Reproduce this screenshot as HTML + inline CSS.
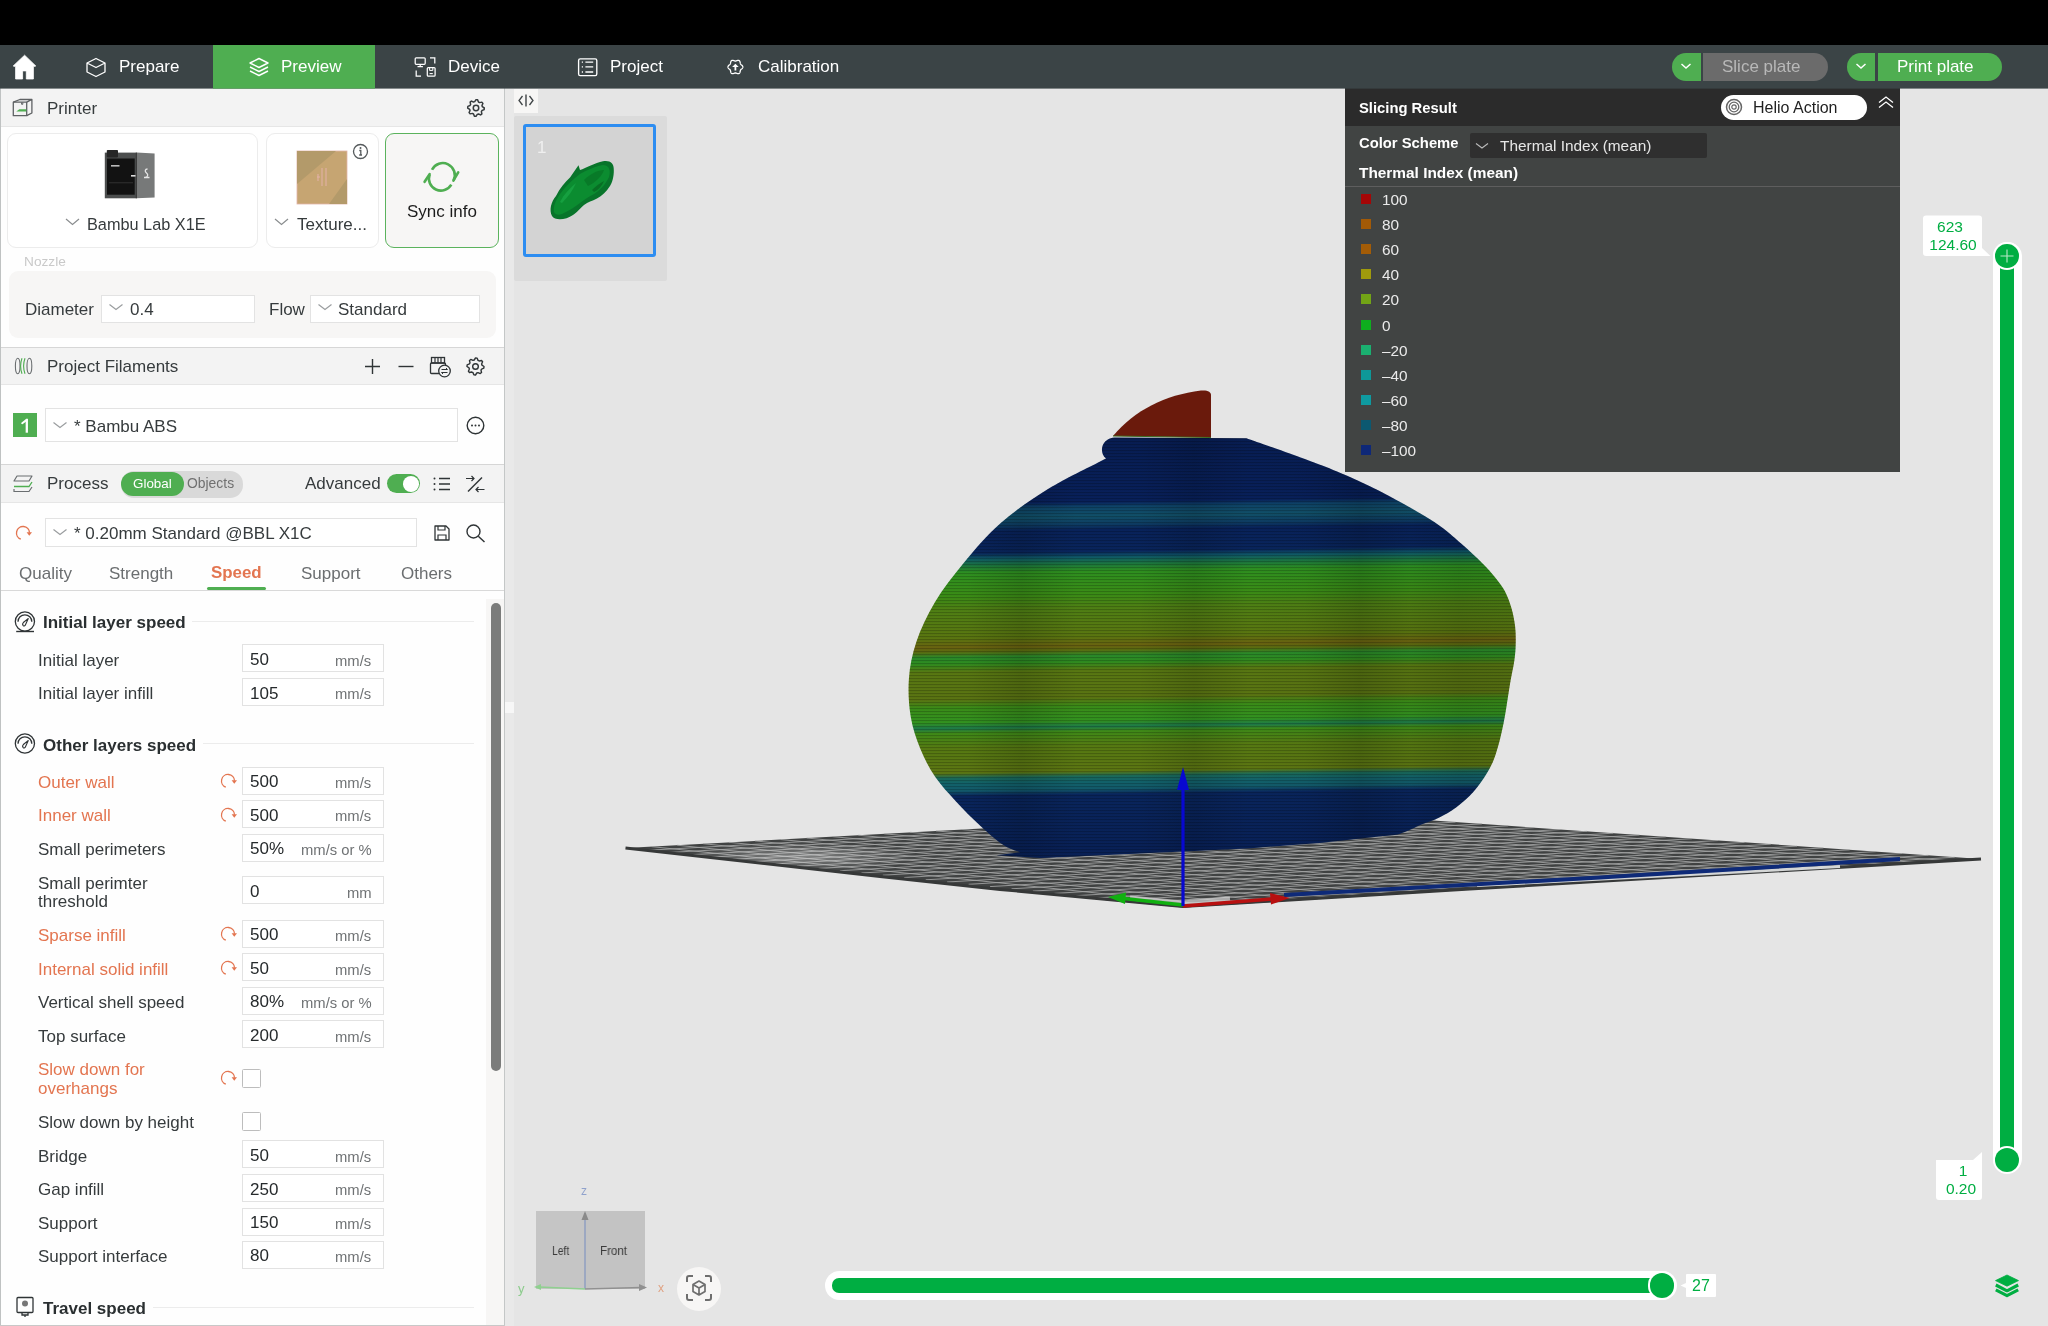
<!DOCTYPE html>
<html><head><meta charset="utf-8"><title>Bambu Studio Preview</title>
<style>
html,body{margin:0;padding:0;width:2048px;height:1326px;overflow:hidden;background:#000;}
body{position:relative;font-family:"Liberation Sans", sans-serif;}
.t{position:absolute;white-space:nowrap;font-family:"Liberation Sans", sans-serif;-webkit-font-smoothing:antialiased;will-change:transform;}
.b{position:absolute;}
svg.b{overflow:visible;}
</style></head><body>
<div class="b" style="left:0px;top:0px;width:2048px;height:45px;background:#000"></div>
<div class="b" style="left:0px;top:45px;width:2048px;height:43px;background:#3b4446"></div>
<div class="b" style="left:213px;top:45px;width:162.4px;height:43px;background:#4fae51"></div>
<svg class="b" style="left:12px;top:53px;" width="26" height="27" viewBox="0 0 26 27"><path d="M12.6 2.2 L1.2 13 L3.6 13.6 L3.6 26 L10.6 26 L10.6 17.9 L14.3 17.9 L14.3 26 L21.4 26 L21.4 13.6 L23.8 13 Z" fill="#fff" stroke="#fff" stroke-width="0.8" stroke-linejoin="round"/></svg>
<svg class="b" style="left:85px;top:57px;" width="22" height="21" viewBox="0 0 22 21"><path d="M11 1.5 L20 6 L20 15 L11 19.5 L2 15 L2 6 Z M2 6 L11 10.5 L20 6" fill="none" stroke="#fff" stroke-width="1.3" stroke-linejoin="round"/></svg>
<svg class="b" style="left:248px;top:57px;" width="22" height="21" viewBox="0 0 22 21"><path d="M11 1.5 L20 6 L11 10.5 L2 6 Z" fill="none" stroke="#fff" stroke-width="1.4" stroke-linejoin="round"/><path d="M2 10 L11 14.5 L20 10 M2 14 L11 18.5 L20 14" fill="none" stroke="#fff" stroke-width="1.4" stroke-linejoin="round"/></svg>
<svg class="b" style="left:405px;top:50px;" width="50" height="32" viewBox="0 0 50 32"><g fill="none" stroke="#fff" stroke-width="1.25"><rect x="10.2" y="7.8" width="10" height="6.5" rx="1"/><path d="M15.2 14.3 V16.5 M12.5 16.6 H17.9"/><path d="M25 7.8 H29.8 V13.6"/><path d="M11.2 20.5 V26 H16"/><rect x="22.3" y="17.6" width="7.8" height="8.6" rx="1"/><path d="M24.6 17.8 V20.4 H27.8 V17.8" stroke-width="1"/><path d="M24.6 23.6 H27.8" stroke-width="1.1"/></g></svg>
<svg class="b" style="left:570px;top:50px;" width="40" height="32" viewBox="0 0 40 32"><rect x="8.6" y="8.8" width="18.2" height="16.8" rx="1.6" fill="none" stroke="#fff" stroke-width="1.35"/><path d="M11.8 12.1 H13 M15.4 12.1 H23.2 M11.8 16.9 H13 M15.4 16.9 H23.2 M11.8 22 H13 M15.4 22 H23.2" stroke="#fff" stroke-width="1.4"/></svg>
<svg class="b" style="left:720px;top:50px;" width="32" height="32" viewBox="0 0 32 32"><path d="M22.84 17.00 L22.79 17.39 L22.66 17.76 L22.45 18.12 L22.18 18.44 L21.87 18.73 L21.56 19.00 L21.25 19.25 L20.98 19.48 L20.75 19.72 L20.56 19.98 L20.43 20.27 L20.34 20.59 L20.27 20.94 L20.21 21.33 L20.14 21.74 L20.04 22.15 L19.89 22.54 L19.69 22.90 L19.43 23.21 L19.12 23.44 L18.76 23.59 L18.37 23.67 L17.96 23.66 L17.54 23.59 L17.13 23.47 L16.75 23.33 L16.38 23.19 L16.04 23.07 L15.71 22.99 L15.40 22.96 L15.09 22.99 L14.76 23.07 L14.42 23.19 L14.05 23.33 L13.67 23.47 L13.26 23.59 L12.84 23.66 L12.43 23.67 L12.04 23.59 L11.68 23.44 L11.37 23.21 L11.11 22.90 L10.91 22.54 L10.76 22.15 L10.66 21.74 L10.59 21.33 L10.53 20.94 L10.46 20.59 L10.37 20.27 L10.24 19.98 L10.05 19.72 L9.82 19.48 L9.55 19.25 L9.24 19.00 L8.93 18.73 L8.62 18.44 L8.35 18.12 L8.14 17.76 L8.01 17.39 L7.96 17.00 L8.01 16.61 L8.14 16.24 L8.35 15.88 L8.62 15.56 L8.93 15.27 L9.24 15.00 L9.55 14.75 L9.82 14.52 L10.05 14.28 L10.24 14.02 L10.37 13.73 L10.46 13.41 L10.53 13.06 L10.59 12.67 L10.66 12.26 L10.76 11.85 L10.91 11.46 L11.11 11.10 L11.37 10.79 L11.68 10.56 L12.04 10.41 L12.43 10.33 L12.84 10.34 L13.26 10.41 L13.67 10.53 L14.05 10.67 L14.42 10.81 L14.76 10.93 L15.09 11.01 L15.40 11.04 L15.71 11.01 L16.04 10.93 L16.38 10.81 L16.75 10.67 L17.13 10.53 L17.54 10.41 L17.96 10.34 L18.37 10.33 L18.76 10.41 L19.12 10.56 L19.43 10.79 L19.69 11.10 L19.89 11.46 L20.04 11.85 L20.14 12.26 L20.21 12.67 L20.27 13.06 L20.34 13.41 L20.43 13.73 L20.56 14.02 L20.75 14.28 L20.98 14.52 L21.25 14.75 L21.56 15.00 L21.87 15.27 L22.18 15.56 L22.45 15.88 L22.66 16.24 L22.79 16.61Z" fill="none" stroke="#fff" stroke-width="1.3"/><path d="M15.4 13.8 L18.7 17 L16.3 17 L16.3 20.4 L14.5 20.4 L14.5 17 L12.1 17 Z" fill="#fff"/></svg>
<div class="t" style="left:118.5px;top:57.6px;font-size:17px;line-height:17px;color:#fff;">Prepare</div>
<div class="t" style="left:281.0px;top:57.6px;font-size:17px;line-height:17px;color:#fff;">Preview</div>
<div class="t" style="left:448.0px;top:57.6px;font-size:17px;line-height:17px;color:#fff;">Device</div>
<div class="t" style="left:610.0px;top:57.6px;font-size:17px;line-height:17px;color:#fff;">Project</div>
<div class="t" style="left:758.0px;top:57.6px;font-size:17px;line-height:17px;color:#fff;">Calibration</div>
<div class="b" style="left:1671.5px;top:52.5px;width:29px;height:28.5px;background:#4fae51;border-radius:14px 0 0 14px"></div>
<div class="b" style="left:1703px;top:52.5px;width:125px;height:28.5px;background:#6b6b6b;border-radius:0 14px 14px 0"></div>
<svg class="b" style="left:1679px;top:61px;" width="14" height="10" viewBox="0 0 14 10"><path d="M2.5 3 L7 7 L11.5 3" fill="none" stroke="#fff" stroke-width="1.5"/></svg>
<div class="t" style="left:1721.5px;top:57.6px;font-size:17px;line-height:17px;color:#b8b8b8;">Slice plate</div>
<div class="b" style="left:1847px;top:52.5px;width:28px;height:28.5px;background:#4fae51;border-radius:14px 0 0 14px"></div>
<div class="b" style="left:1878px;top:52.5px;width:124px;height:28.5px;background:#4fae51;border-radius:0 14px 14px 0"></div>
<svg class="b" style="left:1854px;top:61px;" width="14" height="10" viewBox="0 0 14 10"><path d="M2.5 3 L7 7 L11.5 3" fill="none" stroke="#fff" stroke-width="1.5"/></svg>
<div class="t" style="left:1896.5px;top:57.6px;font-size:17px;line-height:17px;color:#fff;">Print plate</div>
<div class="b" style="left:0px;top:88px;width:505px;height:1238px;background:#fefefe"></div>
<div class="b" style="left:0px;top:88px;width:1px;height:1238px;background:#bfc2c2"></div>
<div class="b" style="left:504px;top:88px;width:1px;height:1238px;background:#c4c7c7"></div>
<div class="b" style="left:505px;top:88px;width:9px;height:1238px;background:#e9e9e9"></div>
<div class="b" style="left:1px;top:88px;width:503px;height:38px;background:#f3f3f3"></div>
<div class="b" style="left:1px;top:126px;width:503px;height:1px;background:#e6e6e6"></div>
<svg class="b" style="left:12px;top:98px;" width="22" height="20" viewBox="0 0 22 20"><g fill="none" stroke="#5f6264" stroke-width="1.3" stroke-linejoin="round"><path d="M1.3 4.2 H14.7 V17.7 H1.3 Z"/><path d="M1.3 4.2 L7.9 1.5 H19.9 L14.7 4.2 M19.9 1.5 V15 L14.7 17.7"/><path d="M9.6 4.4 V6.3 H10.8 V4.4" stroke-width="1"/></g><path d="M4.3 13.6 L7.3 11.3 H14.2 V13.6 Z" fill="#4fae51"/></svg>
<div class="t" style="left:47.0px;top:99.5px;font-size:17px;line-height:17px;color:#363b3d;">Printer</div>
<svg class="b" style="left:466px;top:98px;" width="20" height="20" viewBox="0 0 20 20"><path d="M10.00 1.70 L11.62 1.86 L12.48 4.02 L13.60 4.62 L15.87 4.13 L16.90 5.39 L15.98 7.52 L16.35 8.74 L18.30 10.00 L18.14 11.62 L15.98 12.48 L15.38 13.60 L15.87 15.87 L14.61 16.90 L12.48 15.98 L11.26 16.35 L10.00 18.30 L8.38 18.14 L7.52 15.98 L6.40 15.38 L4.13 15.87 L3.10 14.61 L4.02 12.48 L3.65 11.26 L1.70 10.00 L1.86 8.38 L4.02 7.52 L4.62 6.40 L4.13 4.13 L5.39 3.10 L7.52 4.02 L8.74 3.65Z" fill="none" stroke="#363b3d" stroke-width="1.5" stroke-linejoin="round"/><circle cx="10" cy="10" r="2.74" fill="none" stroke="#363b3d" stroke-width="1.5"/></svg>
<div class="b" style="left:7px;top:132.5px;width:251px;height:115.5px;background:#fff;border:1px solid #ececec;border-radius:9px;box-sizing:border-box"></div>
<div class="b" style="left:265.5px;top:132.5px;width:113px;height:115.5px;background:#fff;border:1px solid #ececec;border-radius:9px;box-sizing:border-box"></div>
<div class="b" style="left:385px;top:132.5px;width:114px;height:115.8px;background:#f7f6f5;border:1.5px solid #5bb35d;border-radius:9px;box-sizing:border-box"></div>
<svg class="b" style="left:98px;top:144px;" width="64" height="60" viewBox="0 0 64 60"><rect x="6.8" y="8.6" width="31.7" height="45.7" fill="#4c4e4e"/><rect x="8.8" y="5.9" width="11.2" height="7.5" rx="0.8" fill="#262626"/><rect x="9" y="14.5" width="27.7" height="36.2" fill="#121212"/><path d="M38.5 8.6 L56.6 9.6 V53.5 L38.5 54.3 Z" fill="#777979"/><rect x="37.8" y="8.6" width="1.2" height="45.7" fill="#3c3c3c"/><rect x="13" y="21" width="8.5" height="1.6" fill="#bbb"/><rect x="33" y="31" width="4.5" height="1.6" fill="#ddd"/><path d="M11 38.8 H35" stroke="#3a3a3a" stroke-width="0.8"/><path d="M49.5 25 C47 25 46.5 27.5 48.5 29 C50.5 30.5 50 33 47 33.5 M46 33.5 H51.5" fill="none" stroke="#e6e6e6" stroke-width="1.3"/></svg>
<svg class="b" style="left:64px;top:217px;" width="18" height="10" viewBox="0 0 18 10"><path d="M2 2 L8.5 7.5 L15 2" fill="none" stroke="#8a8d8f" stroke-width="1.2"/></svg>
<div class="t" style="left:87.0px;top:215.9px;font-size:16.3px;line-height:16.3px;color:#363b3d;">Bambu Lab X1E</div>
<svg class="b" style="left:296px;top:149px;" width="53" height="57" viewBox="0 0 53 57"><rect x="1" y="2" width="50" height="53" fill="#c6a572" stroke="#e2b3a8" stroke-width="0.8"/><path d="M1 2 H40 L1 35 Z" fill="#b39a6a"/><path d="M51 30 L51 55 L33 55 Z" fill="#b39a6a"/><path d="M26 19 V37 M30 19 V37 M24 28 H21 M22 25 V32" stroke="#e4b1a8" stroke-width="1"/></svg>
<svg class="b" style="left:352px;top:143px;" width="17" height="17" viewBox="0 0 17 17"><circle cx="8.5" cy="8.5" r="7" fill="none" stroke="#555a5c" stroke-width="1.3"/><circle cx="8.5" cy="5" r="1" fill="#555a5c"/><path d="M7.3 7.5 H8.8 V12 M7.2 12 H10" stroke="#555a5c" stroke-width="1.3" fill="none"/></svg>
<svg class="b" style="left:273px;top:217px;" width="18" height="10" viewBox="0 0 18 10"><path d="M2 2 L8.5 7.5 L15 2" fill="none" stroke="#8a8d8f" stroke-width="1.2"/></svg>
<div class="t" style="left:296.7px;top:215.6px;font-size:17px;line-height:17px;color:#363b3d;">Texture...</div>
<svg class="b" style="left:410px;top:150px;" width="65" height="50" viewBox="0 0 65 50"><g fill="none" stroke="#4fae51" stroke-width="2.6"><path d="M22 19.8 A12 12 0 0 1 43.6 30.4"/><path d="M43.4 30.6 L48.2 22.4" stroke-linecap="round"/><path d="M41.3 34.6 A12 12 0 0 1 19.6 24.6"/><path d="M19.6 24.2 L14.6 31.8" stroke-linecap="round"/></g></svg>
<div class="t" style="left:406.7px;top:202.5px;font-size:17px;line-height:17px;color:#1c1c1c;">Sync info</div>
<div class="t" style="left:24.0px;top:255.3px;font-size:13.7px;line-height:13.7px;color:#c9c9c9;">Nozzle</div>
<div class="b" style="left:9px;top:270.5px;width:487px;height:67px;background:#f7f6f5;border-radius:9px"></div>
<div class="t" style="left:25.4px;top:301.0px;font-size:17px;line-height:17px;color:#363b3d;">Diameter</div>
<div class="b" style="left:101.3px;top:294.5px;width:154px;height:28px;background:#fff;border:1px solid #e3e3e3;box-sizing:border-box"></div>
<svg class="b" style="left:107px;top:302px;" width="18" height="10" viewBox="0 0 18 10"><path d="M2.5 2.5 L9 7.5 L15.5 2.5" fill="none" stroke="#9a9d9f" stroke-width="1.2"/></svg>
<div class="t" style="left:129.5px;top:301.0px;font-size:17px;line-height:17px;color:#363b3d;">0.4</div>
<div class="t" style="left:269.0px;top:301.0px;font-size:17px;line-height:17px;color:#363b3d;">Flow</div>
<div class="b" style="left:310.3px;top:294.5px;width:169.5px;height:28px;background:#fff;border:1px solid #e3e3e3;box-sizing:border-box"></div>
<svg class="b" style="left:316px;top:302px;" width="18" height="10" viewBox="0 0 18 10"><path d="M2.5 2.5 L9 7.5 L15.5 2.5" fill="none" stroke="#9a9d9f" stroke-width="1.2"/></svg>
<div class="t" style="left:338.2px;top:301.0px;font-size:17px;line-height:17px;color:#363b3d;">Standard</div>
<div class="b" style="left:1px;top:347px;width:503px;height:1.2px;background:#d6d6d6"></div>
<div class="b" style="left:1px;top:348px;width:503px;height:36.5px;background:#f3f3f3"></div>
<div class="b" style="left:1px;top:384px;width:503px;height:1px;background:#e6e6e6"></div>
<svg class="b" style="left:12px;top:355px;" width="24" height="22" viewBox="0 0 24 22"><ellipse cx="5.7" cy="11" rx="2.3" ry="7.8" fill="none" stroke="#6a6e70" stroke-width="1.1"/><ellipse cx="17.4" cy="11" rx="2.4" ry="7.8" fill="none" stroke="#6a6e70" stroke-width="1.1"/><path d="M10 3.3 Q7.2 11 10 18.7 M13 3.3 Q10.2 11 13 18.7" fill="none" stroke="#4fae51" stroke-width="1.1"/></svg>
<div class="t" style="left:47.2px;top:358.1px;font-size:17px;line-height:17px;color:#363b3d;">Project Filaments</div>
<svg class="b" style="left:363px;top:357px;" width="19" height="19" viewBox="0 0 19 19"><path d="M9.5 2 V17 M2 9.5 H17" stroke="#2f3436" stroke-width="1.4"/></svg>
<svg class="b" style="left:397px;top:357px;" width="18" height="19" viewBox="0 0 18 19"><path d="M1.5 9.5 H16.5" stroke="#2f3436" stroke-width="1.4"/></svg>
<svg class="b" style="left:429px;top:356px;" width="23" height="22" viewBox="0 0 23 22"><rect x="1.5" y="7" width="15" height="10.5" rx="1" fill="none" stroke="#2f3436" stroke-width="1.3"/><rect x="2.5" y="1.5" width="13" height="5.5" fill="none" stroke="#2f3436" stroke-width="1.3"/><path d="M6 2 V6.5 M9 2 V6.5 M12 2 V6.5" stroke="#2f3436" stroke-width="1.2"/><circle cx="15.5" cy="15" r="5.8" fill="#f3f3f3" stroke="#2f3436" stroke-width="1.3"/><path d="M12.5 13.5 H18.5 L17 12 M18.5 16.5 H12.5 L14 18" fill="none" stroke="#2f3436" stroke-width="1"/></svg>
<svg class="b" style="left:465px;top:356px;" width="21" height="21" viewBox="0 0 21 21"><path d="M10.50 2.00 L12.16 2.16 L13.04 4.37 L14.18 4.99 L16.51 4.49 L17.57 5.78 L16.63 7.96 L17.00 9.21 L19.00 10.50 L18.84 12.16 L16.63 13.04 L16.01 14.18 L16.51 16.51 L15.22 17.57 L13.04 16.63 L11.79 17.00 L10.50 19.00 L8.84 18.84 L7.96 16.63 L6.82 16.01 L4.49 16.51 L3.43 15.22 L4.37 13.04 L4.00 11.79 L2.00 10.50 L2.16 8.84 L4.37 7.96 L4.99 6.82 L4.49 4.49 L5.78 3.43 L7.96 4.37 L9.21 4.00Z" fill="none" stroke="#2f3436" stroke-width="1.4" stroke-linejoin="round"/><circle cx="10.5" cy="10.5" r="2.81" fill="none" stroke="#2f3436" stroke-width="1.4"/></svg>
<div class="b" style="left:13px;top:413px;width:24px;height:24px;background:#4fae51"></div>
<svg class="b" style="left:13px;top:413px;" width="24" height="24" viewBox="0 0 24 24"><path d="M13.8 6.4 V19.7" stroke="#fff" stroke-width="2.3"/><path d="M14 6.6 L9.2 10.2" stroke="#fff" stroke-width="2" stroke-linecap="round"/></svg>
<div class="b" style="left:45px;top:408.2px;width:413px;height:34px;background:#fff;border:1px solid #e3e3e3;box-sizing:border-box"></div>
<svg class="b" style="left:51px;top:420px;" width="18" height="10" viewBox="0 0 18 10"><path d="M2.5 2.5 L9 7.5 L15.5 2.5" fill="none" stroke="#9a9d9f" stroke-width="1.2"/></svg>
<div class="t" style="left:73.9px;top:418.2px;font-size:17px;line-height:17px;color:#363b3d;">* Bambu ABS</div>
<svg class="b" style="left:466px;top:416px;" width="20" height="20" viewBox="0 0 20 20"><circle cx="9.5" cy="9.5" r="8.3" fill="none" stroke="#2f3436" stroke-width="1.4"/><circle cx="6" cy="9.5" r="1" fill="#2f3436"/><circle cx="9.5" cy="9.5" r="1" fill="#2f3436"/><circle cx="13" cy="9.5" r="1" fill="#2f3436"/></svg>
<div class="b" style="left:1px;top:464px;width:503px;height:1.2px;background:#d6d6d6"></div>
<div class="b" style="left:1px;top:465px;width:503px;height:37.5px;background:#f3f3f3"></div>
<div class="b" style="left:1px;top:502px;width:503px;height:1px;background:#e6e6e6"></div>
<svg class="b" style="left:12px;top:474px;" width="22" height="20" viewBox="0 0 22 20"><path d="M5 2 H20 L17 7 H2 Z" fill="none" stroke="#6a6e70" stroke-width="1.2" stroke-linejoin="round"/><path d="M20 8 L17 12.5 H2" fill="none" stroke="#4fae51" stroke-width="1.3"/><path d="M20 13 L17 17.5 H2 V15" fill="none" stroke="#6a6e70" stroke-width="1.2"/></svg>
<div class="t" style="left:47.2px;top:475.3px;font-size:17px;line-height:17px;color:#363b3d;">Process</div>
<div class="b" style="left:120.5px;top:471px;width:122.5px;height:26.5px;background:#d9d9d9;border-radius:13px"></div>
<div class="b" style="left:121.2px;top:472px;width:62.6px;height:23.8px;background:#4fae51;border-radius:12px"></div>
<div class="t" style="left:132.7px;top:477.2px;font-size:13.4px;line-height:13.4px;color:#fff;">Global</div>
<div class="t" style="left:186.6px;top:476.7px;font-size:13.9px;line-height:13.9px;color:#707070;">Objects</div>
<div class="t" style="left:305.2px;top:475.2px;font-size:17px;line-height:17px;color:#363b3d;">Advanced</div>
<div class="b" style="left:387px;top:474.3px;width:33px;height:19px;background:#4fae51;border-radius:10px"></div>
<div class="b" style="left:402.5px;top:476px;width:16px;height:15.5px;background:#fff;border-radius:50%"></div>
<svg class="b" style="left:432px;top:476px;" width="20" height="16" viewBox="0 0 20 16"><path d="M7 2.5 H18 M7 8 H18 M7 13.5 H18" stroke="#2f3436" stroke-width="1.5"/><circle cx="2.5" cy="2.5" r="1" fill="#2f3436"/><circle cx="2.5" cy="8" r="1" fill="#2f3436"/><circle cx="2.5" cy="13.5" r="1" fill="#2f3436"/></svg>
<svg class="b" style="left:465px;top:475px;" width="21" height="19" viewBox="0 0 21 19"><path d="M3 16.5 L17 2.5" stroke="#2f3436" stroke-width="1.4"/><path d="M1 3.5 H9 M6.5 1 L9 3.5 L6.5 6" fill="none" stroke="#2f3436" stroke-width="1.2"/><path d="M19.5 14.5 H11 M13.5 12 L11 14.5 L13.5 17" fill="none" stroke="#2f3436" stroke-width="1.2"/></svg>
<svg class="b" style="left:13.5px;top:525px;" width="18" height="16" viewBox="0 0 18 16"><path d="M6.8 14.1 A6.5 6.5 0 1 1 15.5 7.8" fill="none" stroke="#e37550" stroke-width="1.4"/><path d="M12.6 7.3 L18 7.3 L15.3 10.8 Z" fill="#e37550"/></svg>
<div class="b" style="left:45px;top:518px;width:372px;height:28.5px;background:#fff;border:1px solid #e3e3e3;box-sizing:border-box"></div>
<svg class="b" style="left:51px;top:527px;" width="18" height="10" viewBox="0 0 18 10"><path d="M2.5 2.5 L9 7.5 L15.5 2.5" fill="none" stroke="#9a9d9f" stroke-width="1.2"/></svg>
<div class="t" style="left:73.9px;top:524.6px;font-size:17px;line-height:17px;color:#363b3d;">* 0.20mm Standard @BBL X1C</div>
<svg class="b" style="left:433px;top:524px;" width="18" height="18" viewBox="0 0 18 18"><path d="M2 2 H13 L16 5 V16 H2 Z" fill="none" stroke="#2f3436" stroke-width="1.3" stroke-linejoin="round"/><path d="M5 2 V6 H12 V2 M5 16 V11 H13 V16" fill="none" stroke="#2f3436" stroke-width="1.2"/></svg>
<svg class="b" style="left:465px;top:523px;" width="22" height="21" viewBox="0 0 22 21"><circle cx="8.5" cy="8.5" r="6.5" fill="none" stroke="#2f3436" stroke-width="1.4"/><path d="M13.3 13.3 L19.5 19" stroke="#2f3436" stroke-width="1.5"/></svg>
<div class="t" style="left:18.8px;top:565.2px;font-size:17px;line-height:17px;color:#6b6e70;">Quality</div>
<div class="t" style="left:108.5px;top:565.2px;font-size:17px;line-height:17px;color:#6b6e70;">Strength</div>
<div class="t" style="left:211.4px;top:565.3px;font-size:16.9px;line-height:16.9px;color:#e37550;font-weight:bold;">Speed</div>
<div class="t" style="left:301.0px;top:565.2px;font-size:17px;line-height:17px;color:#6b6e70;">Support</div>
<div class="t" style="left:400.6px;top:565.2px;font-size:17px;line-height:17px;color:#6b6e70;">Others</div>
<div class="b" style="left:1px;top:590px;width:503px;height:1.3px;background:#d9d9d9"></div>
<div class="b" style="left:206.8px;top:586.7px;width:59.4px;height:3.2px;background:#4fae51;border-radius:2px"></div>
<div class="b" style="left:486px;top:599px;width:18px;height:727px;background:#f7f6f5"></div>
<div class="b" style="left:491px;top:602.5px;width:9.5px;height:468px;background:#7b7c7b;border-radius:5px"></div>
<div class="b" style="left:505px;top:702px;width:9px;height:11px;background:#f7f7f7"></div>
<svg class="b" style="left:5px;top:599.9px;" width="40" height="40" viewBox="0 0 40 40"><g fill="none" stroke="#2f3436"><circle cx="19.9" cy="21.5" r="9.6" stroke-width="1.3"/><path d="M13 21.7 A6.9 6.9 0 0 1 26.8 21.7" stroke-width="1.3"/><path d="M18.3 25.7 C17.2 24.7 17.6 23.5 18.4 22.5 L23.4 18.3 L20.6 24.5 C20.1 25.7 19.2 26.3 18.3 25.7 Z" stroke-width="1.1"/></g><path d="M11.2 31.5 H29" stroke="#2f3436" stroke-width="1.4"/></svg>
<div class="t" style="left:42.5px;top:614.4px;font-size:17px;line-height:17px;color:#2a2f31;font-weight:bold;">Initial layer speed</div>
<div class="b" style="left:192px;top:621px;width:282px;height:1px;background:#ececec"></div>
<svg class="b" style="left:5px;top:722.2px;" width="40" height="40" viewBox="0 0 40 40"><g fill="none" stroke="#2f3436"><circle cx="19.9" cy="21.5" r="9.6" stroke-width="1.3"/><path d="M13 21.7 A6.9 6.9 0 0 1 26.8 21.7" stroke-width="1.3"/><path d="M18.3 25.7 C17.2 24.7 17.6 23.5 18.4 22.5 L23.4 18.3 L20.6 24.5 C20.1 25.7 19.2 26.3 18.3 25.7 Z" stroke-width="1.1"/></g></svg>
<div class="t" style="left:42.5px;top:736.6px;font-size:17px;line-height:17px;color:#2a2f31;font-weight:bold;">Other layers speed</div>
<div class="b" style="left:203px;top:743px;width:271px;height:1px;background:#ececec"></div>
<div class="t" style="left:37.5px;top:651.6px;font-size:17px;line-height:17px;color:#363b3d;">Initial layer</div>
<div class="b" style="left:241.6px;top:644.3px;width:142px;height:28px;background:#fff;border:1px solid #e2e2e2;box-sizing:border-box"></div>
<div class="t" style="left:250.0px;top:650.8px;font-size:17px;line-height:17px;color:#262a2c;">50</div>
<div class="t" style="right:1676.5px;top:653.6px;font-size:14.8px;line-height:14.8px;color:#6f7274;">mm/s</div>
<div class="t" style="left:37.5px;top:685.3px;font-size:17px;line-height:17px;color:#363b3d;">Initial layer infill</div>
<div class="b" style="left:241.6px;top:678px;width:142px;height:28px;background:#fff;border:1px solid #e2e2e2;box-sizing:border-box"></div>
<div class="t" style="left:250.0px;top:684.5px;font-size:17px;line-height:17px;color:#262a2c;">105</div>
<div class="t" style="right:1676.5px;top:687.3px;font-size:14.8px;line-height:14.8px;color:#6f7274;">mm/s</div>
<div class="t" style="left:37.5px;top:773.9px;font-size:17px;line-height:17px;color:#e37550;">Outer wall</div>
<div class="b" style="left:241.6px;top:766.6px;width:142px;height:28px;background:#fff;border:1px solid #e2e2e2;box-sizing:border-box"></div>
<div class="t" style="left:250.0px;top:773.1px;font-size:17px;line-height:17px;color:#262a2c;">500</div>
<div class="t" style="right:1676.5px;top:775.9px;font-size:14.8px;line-height:14.8px;color:#6f7274;">mm/s</div>
<svg class="b" style="left:219.3px;top:773.1px;" width="18" height="16" viewBox="0 0 18 16"><path d="M6.8 14.1 A6.5 6.5 0 1 1 15.5 7.8" fill="none" stroke="#e37550" stroke-width="1.3"/><path d="M12.6 7.3 L18 7.3 L15.3 10.8 Z" fill="#e37550"/></svg>
<div class="t" style="left:37.5px;top:807.3px;font-size:17px;line-height:17px;color:#e37550;">Inner wall</div>
<div class="b" style="left:241.6px;top:800px;width:142px;height:28px;background:#fff;border:1px solid #e2e2e2;box-sizing:border-box"></div>
<div class="t" style="left:250.0px;top:806.5px;font-size:17px;line-height:17px;color:#262a2c;">500</div>
<div class="t" style="right:1676.5px;top:809.3px;font-size:14.8px;line-height:14.8px;color:#6f7274;">mm/s</div>
<svg class="b" style="left:219.3px;top:806.5px;" width="18" height="16" viewBox="0 0 18 16"><path d="M6.8 14.1 A6.5 6.5 0 1 1 15.5 7.8" fill="none" stroke="#e37550" stroke-width="1.3"/><path d="M12.6 7.3 L18 7.3 L15.3 10.8 Z" fill="#e37550"/></svg>
<div class="t" style="left:37.5px;top:840.9px;font-size:17px;line-height:17px;color:#363b3d;">Small perimeters</div>
<div class="b" style="left:241.6px;top:833.6px;width:142px;height:28px;background:#fff;border:1px solid #e2e2e2;box-sizing:border-box"></div>
<div class="t" style="left:250.0px;top:840.1px;font-size:17px;line-height:17px;color:#262a2c;">50%</div>
<div class="t" style="right:1676.5px;top:842.9px;font-size:14.8px;line-height:14.8px;color:#6f7274;">mm/s or %</div>
<div class="b" style="left:241.6px;top:876.3px;width:142px;height:28px;background:#fff;border:1px solid #e2e2e2;box-sizing:border-box"></div>
<div class="t" style="left:250.0px;top:882.8px;font-size:17px;line-height:17px;color:#262a2c;">0</div>
<div class="t" style="right:1676.5px;top:885.6px;font-size:14.8px;line-height:14.8px;color:#6f7274;">mm</div>
<div class="t" style="left:37.5px;top:926.8px;font-size:17px;line-height:17px;color:#e37550;">Sparse infill</div>
<div class="b" style="left:241.6px;top:919.5px;width:142px;height:28px;background:#fff;border:1px solid #e2e2e2;box-sizing:border-box"></div>
<div class="t" style="left:250.0px;top:926.0px;font-size:17px;line-height:17px;color:#262a2c;">500</div>
<div class="t" style="right:1676.5px;top:928.8px;font-size:14.8px;line-height:14.8px;color:#6f7274;">mm/s</div>
<svg class="b" style="left:219.3px;top:926.0px;" width="18" height="16" viewBox="0 0 18 16"><path d="M6.8 14.1 A6.5 6.5 0 1 1 15.5 7.8" fill="none" stroke="#e37550" stroke-width="1.3"/><path d="M12.6 7.3 L18 7.3 L15.3 10.8 Z" fill="#e37550"/></svg>
<div class="t" style="left:37.5px;top:960.6px;font-size:17px;line-height:17px;color:#e37550;">Internal solid infill</div>
<div class="b" style="left:241.6px;top:953.3px;width:142px;height:28px;background:#fff;border:1px solid #e2e2e2;box-sizing:border-box"></div>
<div class="t" style="left:250.0px;top:959.8px;font-size:17px;line-height:17px;color:#262a2c;">50</div>
<div class="t" style="right:1676.5px;top:962.6px;font-size:14.8px;line-height:14.8px;color:#6f7274;">mm/s</div>
<svg class="b" style="left:219.3px;top:959.8px;" width="18" height="16" viewBox="0 0 18 16"><path d="M6.8 14.1 A6.5 6.5 0 1 1 15.5 7.8" fill="none" stroke="#e37550" stroke-width="1.3"/><path d="M12.6 7.3 L18 7.3 L15.3 10.8 Z" fill="#e37550"/></svg>
<div class="t" style="left:37.5px;top:994.0px;font-size:17px;line-height:17px;color:#363b3d;">Vertical shell speed</div>
<div class="b" style="left:241.6px;top:986.7px;width:142px;height:28px;background:#fff;border:1px solid #e2e2e2;box-sizing:border-box"></div>
<div class="t" style="left:250.0px;top:993.2px;font-size:17px;line-height:17px;color:#262a2c;">80%</div>
<div class="t" style="right:1676.5px;top:996.0px;font-size:14.8px;line-height:14.8px;color:#6f7274;">mm/s or %</div>
<div class="t" style="left:37.5px;top:1027.6px;font-size:17px;line-height:17px;color:#363b3d;">Top surface</div>
<div class="b" style="left:241.6px;top:1020.3px;width:142px;height:28px;background:#fff;border:1px solid #e2e2e2;box-sizing:border-box"></div>
<div class="t" style="left:250.0px;top:1026.8px;font-size:17px;line-height:17px;color:#262a2c;">200</div>
<div class="t" style="right:1676.5px;top:1029.6px;font-size:14.8px;line-height:14.8px;color:#6f7274;">mm/s</div>
<div class="t" style="left:37.5px;top:1147.6px;font-size:17px;line-height:17px;color:#363b3d;">Bridge</div>
<div class="b" style="left:241.6px;top:1140.3px;width:142px;height:28px;background:#fff;border:1px solid #e2e2e2;box-sizing:border-box"></div>
<div class="t" style="left:250.0px;top:1146.8px;font-size:17px;line-height:17px;color:#262a2c;">50</div>
<div class="t" style="right:1676.5px;top:1149.6px;font-size:14.8px;line-height:14.8px;color:#6f7274;">mm/s</div>
<div class="t" style="left:37.5px;top:1181.3px;font-size:17px;line-height:17px;color:#363b3d;">Gap infill</div>
<div class="b" style="left:241.6px;top:1174px;width:142px;height:28px;background:#fff;border:1px solid #e2e2e2;box-sizing:border-box"></div>
<div class="t" style="left:250.0px;top:1180.5px;font-size:17px;line-height:17px;color:#262a2c;">250</div>
<div class="t" style="right:1676.5px;top:1183.3px;font-size:14.8px;line-height:14.8px;color:#6f7274;">mm/s</div>
<div class="t" style="left:37.5px;top:1215.0px;font-size:17px;line-height:17px;color:#363b3d;">Support</div>
<div class="b" style="left:241.6px;top:1207.7px;width:142px;height:28px;background:#fff;border:1px solid #e2e2e2;box-sizing:border-box"></div>
<div class="t" style="left:250.0px;top:1214.2px;font-size:17px;line-height:17px;color:#262a2c;">150</div>
<div class="t" style="right:1676.5px;top:1217.0px;font-size:14.8px;line-height:14.8px;color:#6f7274;">mm/s</div>
<div class="t" style="left:37.5px;top:1248.2px;font-size:17px;line-height:17px;color:#363b3d;">Support interface</div>
<div class="b" style="left:241.6px;top:1240.9px;width:142px;height:28px;background:#fff;border:1px solid #e2e2e2;box-sizing:border-box"></div>
<div class="t" style="left:250.0px;top:1247.4px;font-size:17px;line-height:17px;color:#262a2c;">80</div>
<div class="t" style="right:1676.5px;top:1250.2px;font-size:14.8px;line-height:14.8px;color:#6f7274;">mm/s</div>
<div class="t" style="left:37.5px;top:874.5px;font-size:17px;line-height:17px;color:#363b3d;">Small perimter</div>
<div class="t" style="left:37.5px;top:893.0px;font-size:17px;line-height:17px;color:#363b3d;">threshold</div>
<div class="t" style="left:37.5px;top:1061.0px;font-size:17px;line-height:17px;color:#e37550;">Slow down for</div>
<div class="t" style="left:37.5px;top:1080.1px;font-size:17px;line-height:17px;color:#e37550;">overhangs</div>
<svg class="b" style="left:219.3px;top:1070px;" width="18" height="16" viewBox="0 0 18 16"><path d="M6.8 14.1 A6.5 6.5 0 1 1 15.5 7.8" fill="none" stroke="#e37550" stroke-width="1.3"/><path d="M12.6 7.3 L18 7.3 L15.3 10.8 Z" fill="#e37550"/></svg>
<div class="b" style="left:242.2px;top:1068.6px;width:18.5px;height:19px;background:#fff;border:1px solid #bdbdbd;border-radius:1.5px;box-sizing:border-box"></div>
<div class="t" style="left:37.5px;top:1113.6px;font-size:17px;line-height:17px;color:#363b3d;">Slow down by height</div>
<div class="b" style="left:242.2px;top:1111.7px;width:18.5px;height:19px;background:#fff;border:1px solid #bdbdbd;border-radius:1.5px;box-sizing:border-box"></div>
<svg class="b" style="left:15px;top:1296px;" width="20" height="22" viewBox="0 0 20 22"><rect x="2" y="1.5" width="16" height="15" rx="1" fill="none" stroke="#2f3436" stroke-width="1.3"/><circle cx="10" cy="7.5" r="3" fill="#777"/><path d="M7 16.5 V19 H13 V16.5 M10 19 V21" fill="none" stroke="#2f3436" stroke-width="1.3"/></svg>
<div class="t" style="left:42.6px;top:1299.6px;font-size:17px;line-height:17px;color:#2a2f31;font-weight:bold;">Travel speed</div>
<div class="b" style="left:153px;top:1307px;width:321px;height:1px;background:#ececec"></div>
<div class="b" style="left:0px;top:1325px;width:505px;height:1px;background:#c8c8c8"></div>
<div class="b" style="left:514px;top:88px;width:1534px;height:1238px;background:#e5e5e5"></div>
<div class="b" style="left:514px;top:89px;width:24px;height:24px;background:#f7f6f5"></div>
<svg class="b" style="left:517px;top:92px;" width="18" height="17" viewBox="0 0 18 17"><path d="M5.5 4 L2 8.5 L5.5 13 M12.5 4 L16 8.5 L12.5 13" fill="none" stroke="#3f4446" stroke-width="1.3"/><path d="M9 2.5 V14.5" stroke="#3f4446" stroke-width="1.4"/></svg>
<div class="b" style="left:514px;top:116px;width:153px;height:165px;background:#dbdbdb;border-radius:2px"></div>
<div class="b" style="left:522.7px;top:124.3px;width:133.3px;height:133px;background:#d3d3d3;border:3px solid #2d8df1;border-radius:3px;box-sizing:border-box"></div>
<div class="t" style="left:536.5px;top:138.6px;font-size:17px;line-height:17px;color:#efefef;">1</div>
<svg class="b" style="left:540px;top:150px;" width="80" height="75" viewBox="0 0 80 75"><path d="M12 66 C9 60 11 52 16 46 C20 38 25 32 30 27.5 L38.5 15.3 L40 20 C46 18 55 13 63 11.2 C70 10 74 13 73.8 20 C74 27 72 33 70 36 C66 42 62 46 57 48.5 C52 51 48 52 44 55 C40 58 38 62 33 65 C26 70 15 71 12 66 Z" fill="#08742a"/><path d="M14 62 C13 56 16 50 20 44 C26 36 32 30 40 24 C47 20 56 16 63 15 C69 15 71 20 69 27 C66 34 60 40 54 44 C48 47 44 50 40 53 C35 57 30 60 26 62 C21 65 16 66 14 62 Z" fill="#0b8c30"/><path d="M20 52 C24 44 30 38 36 33 C33 40 28 47 22 53 Z" fill="#16a040"/><path d="M44 30 C50 24 58 20 64 20 C62 26 56 32 48 36 Z" fill="#087a28"/><path d="M52 40 C56 36 60 33 64 31 C62 36 58 40 54 42 Z" fill="#086e24"/></svg>
<svg class="b" style="left:0;top:0" width="2048" height="1326" viewBox="0 0 2048 1326"><defs><linearGradient id="bodyg" x1="1200" y1="437" x2="1206" y2="858" gradientUnits="userSpaceOnUse"><stop offset="0.0" stop-color="#071d52"/><stop offset="0.15" stop-color="#08205a"/><stop offset="0.162" stop-color="#0e4468"/><stop offset="0.185" stop-color="#115068"/><stop offset="0.205" stop-color="#0d3a62"/><stop offset="0.217" stop-color="#08225a"/><stop offset="0.268" stop-color="#09255c"/><stop offset="0.282" stop-color="#0f5a66"/><stop offset="0.3" stop-color="#1e7a3a"/><stop offset="0.315" stop-color="#2e9020"/><stop offset="0.37" stop-color="#3a8c16"/><stop offset="0.4" stop-color="#4e8014"/><stop offset="0.47" stop-color="#5a7610"/><stop offset="0.492" stop-color="#6a6210"/><stop offset="0.502" stop-color="#5a6c10"/><stop offset="0.515" stop-color="#2a8a2a"/><stop offset="0.53" stop-color="#2e8c20"/><stop offset="0.55" stop-color="#587812"/><stop offset="0.615" stop-color="#5a7412"/><stop offset="0.635" stop-color="#3a8c18"/><stop offset="0.67" stop-color="#329220"/><stop offset="0.684" stop-color="#1e7a4a"/><stop offset="0.695" stop-color="#3e8a18"/><stop offset="0.73" stop-color="#567a12"/><stop offset="0.79" stop-color="#5c7612"/><stop offset="0.802" stop-color="#1a6a5a"/><stop offset="0.815" stop-color="#12626a"/><stop offset="0.832" stop-color="#125a6a"/><stop offset="0.845" stop-color="#09255c"/><stop offset="1.0" stop-color="#082056"/></linearGradient><pattern id="stripes" width="8" height="3" patternUnits="userSpaceOnUse"><rect width="8" height="1.1" fill="#000" opacity="0.2"/></pattern><pattern id="grid" width="12" height="12" patternUnits="userSpaceOnUse" patternTransform="scale(1,0.32) rotate(45)"><rect width="12" height="12" fill="#3e4040"/><path d="M0 0.6 H12 M0.6 0 V12" stroke="#b4b4b4" stroke-width="1.3"/></pattern><linearGradient id="ribs" x1="905" y1="0" x2="1520" y2="0" gradientUnits="userSpaceOnUse"><stop offset="0" stop-color="#000" stop-opacity="0.0"/><stop offset="0.1" stop-color="#000" stop-opacity="0.0"/><stop offset="0.19" stop-color="#000" stop-opacity="0.13"/><stop offset="0.28" stop-color="#000" stop-opacity="0.0"/><stop offset="0.38" stop-color="#000" stop-opacity="0.0"/><stop offset="0.47" stop-color="#000" stop-opacity="0.12"/><stop offset="0.56" stop-color="#000" stop-opacity="0.0"/><stop offset="0.65" stop-color="#000" stop-opacity="0.02"/><stop offset="0.74" stop-color="#000" stop-opacity="0.15"/><stop offset="0.82" stop-color="#000" stop-opacity="0.04"/><stop offset="0.9" stop-color="#000" stop-opacity="0.12"/><stop offset="1.0" stop-color="#000" stop-opacity="0.08"/></linearGradient><radialGradient id="hl" cx="800" cy="857" r="120" gradientUnits="userSpaceOnUse" gradientTransform="translate(800 857) scale(1 0.12) translate(-800 -857)"><stop offset="0" stop-color="#fff" stop-opacity="0.35"/><stop offset="1" stop-color="#fff" stop-opacity="0"/></radialGradient></defs><path d="M625.5 848 L1298 811 L1981 859 L1469.7 889.7 L1183 907.5 L1000 889.9 L880 877 Z" fill="#404242"/><path d="M651.4 846.6 L1213.7 905.2 M646.9 850.3 L1324.3 812.8 M677.2 845.2 L1244.4 903.3 M668.4 852.5 L1350.5 814.7 M703.1 843.7 L1275.1 901.5 M689.8 854.8 L1376.8 816.5 M729.0 842.3 L1305.8 899.6 M711.3 857.1 L1403.1 818.4 M754.8 840.9 L1336.5 897.8 M732.7 859.3 L1429.3 820.2 M780.7 839.5 L1367.2 895.9 M754.2 861.6 L1455.6 822.1 M806.6 838.0 L1397.8 894.1 M775.6 863.9 L1481.9 823.9 M832.4 836.6 L1428.5 892.2 M797.0 866.2 L1508.2 825.8 M858.3 835.2 L1459.2 890.4 M818.5 868.4 L1534.4 827.6 M884.2 833.8 L1489.9 888.5 M839.9 870.7 L1560.7 829.5 M910.0 832.3 L1520.6 886.7 M861.4 873.0 L1587.0 831.3 M935.9 830.9 L1551.3 884.8 M882.8 875.2 L1613.2 833.2 M961.8 829.5 L1582.0 883.0 M904.2 877.5 L1639.5 835.0 M987.6 828.1 L1612.7 881.2 M925.7 879.8 L1665.8 836.8 M1013.5 826.7 L1643.4 879.3 M947.1 882.0 L1692.0 838.7 M1039.3 825.2 L1674.1 877.5 M968.6 884.3 L1718.3 840.5 M1065.2 823.8 L1704.8 875.6 M990.0 886.6 L1744.6 842.4 M1091.1 822.4 L1735.5 873.8 M1011.5 888.8 L1770.8 844.2 M1116.9 821.0 L1766.2 871.9 M1032.9 891.1 L1797.1 846.1 M1142.8 819.5 L1796.8 870.1 M1054.3 893.4 L1823.4 847.9 M1168.7 818.1 L1827.5 868.2 M1075.8 895.7 L1849.7 849.8 M1194.5 816.7 L1858.2 866.4 M1097.2 897.9 L1875.9 851.6 M1220.4 815.3 L1888.9 864.5 M1118.7 900.2 L1902.2 853.5 M1246.3 813.8 L1919.6 862.7 M1140.1 902.5 L1928.5 855.3 M1272.1 812.4 L1950.3 860.8 M1161.6 904.7 L1954.7 857.2" stroke="#a4a6a6" stroke-width="1" fill="none" opacity="0.85"/><path d="M625.5 848 L1298 811 L1981 859 L1469.7 889.7 L1183 907.5 L1000 889.9 L880 877 Z" fill="url(#hl)"/><path d="M625.5 848 L880 876.5 L1000 889.4 L1183 906.5 L1469.7 889 L1981 859" fill="none" stroke="#363838" stroke-width="3" stroke-linejoin="round"/><path d="M1130 898 L1183 903 L1230 899" fill="none" stroke="#d8d8d8" stroke-width="5" opacity="0.7"/><path d="M1477 885.5 L1700 874 L1840 866.5" fill="none" stroke="#d4d6d6" stroke-width="3"/><path d="M1284 895 L1600 877.5 L1900 859" fill="none" stroke="#0e2a78" stroke-width="4"/><path d="M1106 458.5 C1101 455 1101 447 1104 443 C1107 439 1111 437.5 1116 437.5 L1246.4 438.3 C1256.7 441.9 1291.3 453.9 1308.1 460.2 C1324.9 466.4 1333.5 469.8 1347.2 475.8 C1360.9 481.9 1375.5 488.8 1390.0 496.5 C1404.5 504.2 1422.4 514.2 1434.3 522.1 C1446.2 530.0 1453.5 537.0 1461.4 543.8 C1469.3 550.6 1476.1 557.1 1481.8 562.8 C1487.5 568.4 1491.6 573.0 1495.4 577.7 C1499.2 582.5 1502.2 586.1 1504.9 591.3 C1507.6 596.5 1510.0 603.1 1511.7 609.0 C1513.4 614.9 1514.4 621.0 1515.1 626.6 C1515.8 632.2 1515.8 637.3 1515.7 642.9 C1515.6 648.5 1515.4 653.1 1514.4 660.0 C1513.5 666.9 1511.8 673.4 1510.0 684.0 C1508.2 694.6 1505.9 711.8 1503.5 723.5 C1501.1 735.2 1498.5 746.0 1495.7 754.2 C1493.0 762.5 1490.7 766.7 1487.0 773.0 C1483.3 779.3 1478.6 786.1 1473.5 791.8 C1468.4 797.5 1462.1 802.9 1456.4 807.2 C1450.7 811.5 1445.0 814.5 1439.3 817.4 C1433.6 820.2 1428.8 821.6 1422.2 824.3 C1415.7 827.0 1406.8 831.7 1400.0 833.7 C1393.2 835.7 1384.3 835.8 1381.2 836.2 L1319.6 843 L1251.3 848.2 L1200 850.7 L1040.9 858 L996.5 855.2 L1020 852.3 C1017.2 851.0 1009.6 849.2 1003.0 844.8 C996.4 840.4 988.3 833.2 980.5 826.0 C972.7 818.8 963.5 809.6 956.0 801.4 C948.5 793.2 941.3 785.8 935.3 777.0 C929.3 768.2 924.3 758.7 920.2 748.6 C916.1 738.5 912.6 728.2 910.7 716.6 C908.8 705.0 908.0 691.4 908.9 678.9 C909.8 666.4 912.1 654.6 916.4 641.8 C920.7 629.0 927.0 615.4 934.9 602.2 C942.8 589.0 952.9 575.9 963.9 562.7 C974.9 549.5 986.7 535.3 1000.8 523.0 C1014.9 510.7 1030.9 499.6 1048.4 488.8 C1065.9 478.1 1096.4 463.6 1106.0 458.5 Z" fill="url(#bodyg)"/><path d="M1106 458.5 C1101 455 1101 447 1104 443 C1107 439 1111 437.5 1116 437.5 L1246.4 438.3 C1256.7 441.9 1291.3 453.9 1308.1 460.2 C1324.9 466.4 1333.5 469.8 1347.2 475.8 C1360.9 481.9 1375.5 488.8 1390.0 496.5 C1404.5 504.2 1422.4 514.2 1434.3 522.1 C1446.2 530.0 1453.5 537.0 1461.4 543.8 C1469.3 550.6 1476.1 557.1 1481.8 562.8 C1487.5 568.4 1491.6 573.0 1495.4 577.7 C1499.2 582.5 1502.2 586.1 1504.9 591.3 C1507.6 596.5 1510.0 603.1 1511.7 609.0 C1513.4 614.9 1514.4 621.0 1515.1 626.6 C1515.8 632.2 1515.8 637.3 1515.7 642.9 C1515.6 648.5 1515.4 653.1 1514.4 660.0 C1513.5 666.9 1511.8 673.4 1510.0 684.0 C1508.2 694.6 1505.9 711.8 1503.5 723.5 C1501.1 735.2 1498.5 746.0 1495.7 754.2 C1493.0 762.5 1490.7 766.7 1487.0 773.0 C1483.3 779.3 1478.6 786.1 1473.5 791.8 C1468.4 797.5 1462.1 802.9 1456.4 807.2 C1450.7 811.5 1445.0 814.5 1439.3 817.4 C1433.6 820.2 1428.8 821.6 1422.2 824.3 C1415.7 827.0 1406.8 831.7 1400.0 833.7 C1393.2 835.7 1384.3 835.8 1381.2 836.2 L1319.6 843 L1251.3 848.2 L1200 850.7 L1040.9 858 L996.5 855.2 L1020 852.3 C1017.2 851.0 1009.6 849.2 1003.0 844.8 C996.4 840.4 988.3 833.2 980.5 826.0 C972.7 818.8 963.5 809.6 956.0 801.4 C948.5 793.2 941.3 785.8 935.3 777.0 C929.3 768.2 924.3 758.7 920.2 748.6 C916.1 738.5 912.6 728.2 910.7 716.6 C908.8 705.0 908.0 691.4 908.9 678.9 C909.8 666.4 912.1 654.6 916.4 641.8 C920.7 629.0 927.0 615.4 934.9 602.2 C942.8 589.0 952.9 575.9 963.9 562.7 C974.9 549.5 986.7 535.3 1000.8 523.0 C1014.9 510.7 1030.9 499.6 1048.4 488.8 C1065.9 478.1 1096.4 463.6 1106.0 458.5 Z" fill="url(#stripes)"/><path d="M1106 458.5 C1101 455 1101 447 1104 443 C1107 439 1111 437.5 1116 437.5 L1246.4 438.3 C1256.7 441.9 1291.3 453.9 1308.1 460.2 C1324.9 466.4 1333.5 469.8 1347.2 475.8 C1360.9 481.9 1375.5 488.8 1390.0 496.5 C1404.5 504.2 1422.4 514.2 1434.3 522.1 C1446.2 530.0 1453.5 537.0 1461.4 543.8 C1469.3 550.6 1476.1 557.1 1481.8 562.8 C1487.5 568.4 1491.6 573.0 1495.4 577.7 C1499.2 582.5 1502.2 586.1 1504.9 591.3 C1507.6 596.5 1510.0 603.1 1511.7 609.0 C1513.4 614.9 1514.4 621.0 1515.1 626.6 C1515.8 632.2 1515.8 637.3 1515.7 642.9 C1515.6 648.5 1515.4 653.1 1514.4 660.0 C1513.5 666.9 1511.8 673.4 1510.0 684.0 C1508.2 694.6 1505.9 711.8 1503.5 723.5 C1501.1 735.2 1498.5 746.0 1495.7 754.2 C1493.0 762.5 1490.7 766.7 1487.0 773.0 C1483.3 779.3 1478.6 786.1 1473.5 791.8 C1468.4 797.5 1462.1 802.9 1456.4 807.2 C1450.7 811.5 1445.0 814.5 1439.3 817.4 C1433.6 820.2 1428.8 821.6 1422.2 824.3 C1415.7 827.0 1406.8 831.7 1400.0 833.7 C1393.2 835.7 1384.3 835.8 1381.2 836.2 L1319.6 843 L1251.3 848.2 L1200 850.7 L1040.9 858 L996.5 855.2 L1020 852.3 C1017.2 851.0 1009.6 849.2 1003.0 844.8 C996.4 840.4 988.3 833.2 980.5 826.0 C972.7 818.8 963.5 809.6 956.0 801.4 C948.5 793.2 941.3 785.8 935.3 777.0 C929.3 768.2 924.3 758.7 920.2 748.6 C916.1 738.5 912.6 728.2 910.7 716.6 C908.8 705.0 908.0 691.4 908.9 678.9 C909.8 666.4 912.1 654.6 916.4 641.8 C920.7 629.0 927.0 615.4 934.9 602.2 C942.8 589.0 952.9 575.9 963.9 562.7 C974.9 549.5 986.7 535.3 1000.8 523.0 C1014.9 510.7 1030.9 499.6 1048.4 488.8 C1065.9 478.1 1096.4 463.6 1106.0 458.5 Z" fill="url(#ribs)"/><path d="M1113 436 C1135 410 1165 395 1201 390.5 C1208 390 1211 392 1211 395 L1211 437.5 Z" fill="#6a1a0c"/><path d="M1113 436 L1211 437.5" stroke="#3a6a20" stroke-width="1"/><path d="M1183 905 L1124 898.5" stroke="#10b010" stroke-width="3.6"/><path d="M1126 892.5 L1108 897 L1125 904 Z" fill="#10b010"/><path d="M1183 906 L1272 899" stroke="#b81010" stroke-width="3.6"/><path d="M1270 893 L1290 898 L1271 904.5 Z" fill="#b81010"/><path d="M1183 906 L1183 785" stroke="#0808d0" stroke-width="3.2"/><path d="M1177 790 L1183 767 L1189 790 Z" fill="#0808d0"/></svg>
<div class="b" style="left:1345px;top:88px;width:554.5px;height:38px;background:#2b2b2b"></div>
<div class="b" style="left:1345px;top:126px;width:554.5px;height:346px;background:#414443"></div>
<div class="t" style="left:1359.4px;top:100.8px;font-size:14.8px;line-height:14.8px;color:#fff;font-weight:bold;">Slicing Result</div>
<div class="b" style="left:1720.5px;top:94.8px;width:146.3px;height:25px;background:#fff;border-radius:13px"></div>
<svg class="b" style="left:1725px;top:98px;" width="18" height="18" viewBox="0 0 18 18"><circle cx="9" cy="9" r="7.5" fill="none" stroke="#666" stroke-width="1.5"/><circle cx="9" cy="9" r="4.8" fill="none" stroke="#666" stroke-width="1.3"/><circle cx="9" cy="9" r="2.2" fill="none" stroke="#666" stroke-width="1.2"/></svg>
<div class="t" style="left:1752.7px;top:99.8px;font-size:16px;line-height:16px;color:#1f1f1f;">Helio Action</div>
<svg class="b" style="left:1877px;top:95px;" width="18" height="15" viewBox="0 0 18 15"><path d="M2 7.5 L9 2 L16 7.5 M2 12.5 L9 7 L16 12.5" fill="none" stroke="#fff" stroke-width="1.3"/></svg>
<div class="t" style="left:1359.4px;top:135.7px;font-size:14.8px;line-height:14.8px;color:#fff;font-weight:bold;">Color Scheme</div>
<div class="b" style="left:1469.6px;top:133.3px;width:237px;height:24.7px;background:#2f2f2f;border-radius:2px"></div>
<svg class="b" style="left:1474px;top:141px;" width="17" height="10" viewBox="0 0 17 10"><path d="M2 2.5 L8 7 L14 2.5" fill="none" stroke="#bbb" stroke-width="1.1"/></svg>
<div class="t" style="left:1500.0px;top:138.1px;font-size:15.4px;line-height:15.4px;color:#e6e6e6;">Thermal Index (mean)</div>
<div class="t" style="left:1359.4px;top:165.0px;font-size:15.4px;line-height:15.4px;color:#fff;font-weight:bold;">Thermal Index (mean)</div>
<div class="b" style="left:1345px;top:185.5px;width:554.5px;height:1.5px;background:#5e5e5e"></div>
<div class="b" style="left:1361px;top:194.0px;width:10px;height:10px;background:#a50606"></div>
<div class="t" style="left:1382.2px;top:192.0px;font-size:15.35px;line-height:15.35px;color:#eaeaea;">100</div>
<div class="b" style="left:1361px;top:219.1px;width:10px;height:10px;background:#a35a06"></div>
<div class="t" style="left:1382.2px;top:217.1px;font-size:15.35px;line-height:15.35px;color:#eaeaea;">80</div>
<div class="b" style="left:1361px;top:244.2px;width:10px;height:10px;background:#a35c06"></div>
<div class="t" style="left:1382.2px;top:242.2px;font-size:15.35px;line-height:15.35px;color:#eaeaea;">60</div>
<div class="b" style="left:1361px;top:269.3px;width:10px;height:10px;background:#a09a0c"></div>
<div class="t" style="left:1382.2px;top:267.3px;font-size:15.35px;line-height:15.35px;color:#eaeaea;">40</div>
<div class="b" style="left:1361px;top:294.4px;width:10px;height:10px;background:#72a416"></div>
<div class="t" style="left:1382.2px;top:292.4px;font-size:15.35px;line-height:15.35px;color:#eaeaea;">20</div>
<div class="b" style="left:1361px;top:319.5px;width:10px;height:10px;background:#0eae1e"></div>
<div class="t" style="left:1382.2px;top:317.5px;font-size:15.35px;line-height:15.35px;color:#eaeaea;">0</div>
<div class="b" style="left:1361px;top:344.6px;width:10px;height:10px;background:#1ab070"></div>
<div class="t" style="left:1382.2px;top:342.6px;font-size:15.35px;line-height:15.35px;color:#eaeaea;">&#8211;20</div>
<div class="b" style="left:1361px;top:369.7px;width:10px;height:10px;background:#0e9898"></div>
<div class="t" style="left:1382.2px;top:367.7px;font-size:15.35px;line-height:15.35px;color:#eaeaea;">&#8211;40</div>
<div class="b" style="left:1361px;top:394.8px;width:10px;height:10px;background:#0e9aa0"></div>
<div class="t" style="left:1382.2px;top:392.8px;font-size:15.35px;line-height:15.35px;color:#eaeaea;">&#8211;60</div>
<div class="b" style="left:1361px;top:419.9px;width:10px;height:10px;background:#0c5870"></div>
<div class="t" style="left:1382.2px;top:417.9px;font-size:15.35px;line-height:15.35px;color:#eaeaea;">&#8211;80</div>
<div class="b" style="left:1361px;top:445.0px;width:10px;height:10px;background:#0e2878"></div>
<div class="t" style="left:1382.2px;top:443.0px;font-size:15.35px;line-height:15.35px;color:#eaeaea;">&#8211;100</div>
<div class="b" style="left:1992.8px;top:242px;width:29px;height:931px;background:#fff;border-radius:14.5px"></div>
<div class="b" style="left:1999.8px;top:256px;width:14.5px;height:903px;background:#00ae42"></div>
<div class="b" style="left:1993.2px;top:241.8px;width:28px;height:28px;background:#fff;border-radius:50%"></div>
<div class="b" style="left:1995.3px;top:243.9px;width:23.8px;height:23.8px;background:#00ae42;border-radius:50%"></div>
<svg class="b" style="left:1999px;top:248px;" width="16" height="16" viewBox="0 0 16 16"><path d="M8 1.5 V14.5 M1.5 8 H14.5" stroke="#b8e8c8" stroke-width="1.1"/></svg>
<div class="b" style="left:1993px;top:1145.8px;width:28px;height:28px;background:#fff;border-radius:50%"></div>
<div class="b" style="left:1995px;top:1147.8px;width:24px;height:24px;background:#00ae42;border-radius:50%"></div>
<svg class="b" style="left:1923px;top:215px;" width="70" height="42" viewBox="0 0 70 42"><path d="M3 0.5 H56 Q59 0.5 59 3.5 V33 L67.5 41 H3 Q0 41 0 38 V3.5 Q0 0.5 3 0.5 Z" fill="#fff"/></svg>
<div class="t" style="left:1750.0px;width:400px;text-align:center;top:218.7px;font-size:15.5px;line-height:15.5px;color:#00ae42;">623</div>
<div class="t" style="left:1752.8px;width:400px;text-align:center;top:236.7px;font-size:15.5px;line-height:15.5px;color:#00ae42;">124.60</div>
<svg class="b" style="left:1935px;top:1151px;" width="60" height="50" viewBox="0 0 60 50"><path d="M1 9 H38 L47 1 V46 Q47 49 44 49 H4 Q1 49 1 46 Z" fill="#fff"/></svg>
<div class="t" style="left:1762.5px;width:400px;text-align:center;top:1162.8px;font-size:15.5px;line-height:15.5px;color:#00ae42;">1</div>
<div class="t" style="left:1761.0px;width:400px;text-align:center;top:1180.8px;font-size:15.5px;line-height:15.5px;color:#00ae42;">0.20</div>
<div class="b" style="left:825px;top:1271px;width:852px;height:29px;background:#fff;border-radius:14.5px"></div>
<div class="b" style="left:832px;top:1278px;width:830px;height:14.5px;background:#00ae42;border-radius:7px 0 0 7px"></div>
<div class="b" style="left:1647.5px;top:1271px;width:28.5px;height:28.5px;background:#fff;border-radius:50%"></div>
<div class="b" style="left:1649.5px;top:1273px;width:24.5px;height:24.5px;background:#00ae42;border-radius:50%"></div>
<svg class="b" style="left:1678px;top:1272px;" width="40" height="26" viewBox="0 0 40 26"><path d="M9 2 H37 Q38 2 38 3 V24 Q38 25 37 25 H9 Q8 25 8 24 V16 L2.5 13.5 L8 11 V3 Q8 2 9 2 Z" fill="#fff"/></svg>
<div class="t" style="left:1691.5px;top:1277.7px;font-size:16px;line-height:16px;color:#00ae42;">27</div>
<svg class="b" style="left:1994px;top:1273px;" width="26" height="25" viewBox="0 0 26 25"><path d="M13 2 L24.5 7.6 L13 13.2 L1.5 7.6 Z" fill="#00ae42" stroke="#00ae42" stroke-width="0.8" stroke-linejoin="round"/><path d="M1.8 12 L13 17.8 L24.2 12 M1.8 16.8 L13 22.6 L24.2 16.8" fill="none" stroke="#00ae42" stroke-width="3.1" stroke-linejoin="round"/></svg>
<div class="b" style="left:536px;top:1210.5px;width:49px;height:78.5px;background:#c5c5c5"></div>
<div class="b" style="left:585px;top:1210.5px;width:59.5px;height:78.5px;background:#c3c3c3"></div>
<svg class="b" style="left:515px;top:1180px;" width="160" height="120" viewBox="0 0 160 120"><path d="M70 109 V33" stroke="#8c9cc0" stroke-width="1.4"/><path d="M66.5 40 L70 31 L73.5 40 Z" fill="#8a8a8a"/><path d="M70 109 L24 107" stroke="#8fd08f" stroke-width="1.6"/><path d="M26 104 L19 107 L26 110 Z" fill="#8fd08f"/><path d="M70 109 L126 107.5" stroke="#909090" stroke-width="1.4"/><path d="M124 104 L132 107.5 L124 111 Z" fill="#909090"/></svg>
<div class="t" style="left:552.0px;top:1244.8px;font-size:12px;line-height:12px;color:#3b3b3b;transform:scaleX(0.86);transform-origin:left">Left</div>
<div class="t" style="left:600.0px;top:1244.7px;font-size:12.2px;line-height:12.2px;color:#3b3b3b;transform:scaleX(0.95);transform-origin:left">Front</div>
<div class="t" style="left:580.5px;top:1184.8px;font-size:12px;line-height:12px;color:#90a2cc;">z</div>
<div class="t" style="left:517.5px;top:1282.0px;font-size:13px;line-height:13px;color:#8ccc8c;">y</div>
<div class="t" style="left:658.0px;top:1282.3px;font-size:12px;line-height:12px;color:#e0a282;">x</div>
<div class="b" style="left:677px;top:1266.5px;width:44px;height:44px;background:#f7f6f5;border-radius:50%"></div>
<svg class="b" style="left:685px;top:1274px;" width="28" height="28" viewBox="0 0 28 28"><path d="M2 8 V4 Q2 2 4 2 H8 M20 2 H24 Q26 2 26 4 V8 M26 20 V24 Q26 26 24 26 H20 M8 26 H4 Q2 26 2 24 V20" fill="none" stroke="#6e6e6e" stroke-width="2"/><path d="M14 7 L20 10.5 V17.5 L14 21 L8 17.5 V10.5 Z M8 10.5 L14 14 L20 10.5 M14 14 V21" fill="none" stroke="#6e6e6e" stroke-width="1.7" stroke-linejoin="round"/></svg>
<div class="b" style="left:0;top:88px;width:2048px;height:1px;background:#3b4446;opacity:0.6"></div>
<div class="b" style="left:213px;top:88px;width:162.4px;height:1px;background:#4fae51;opacity:0.6"></div>
</body></html>
